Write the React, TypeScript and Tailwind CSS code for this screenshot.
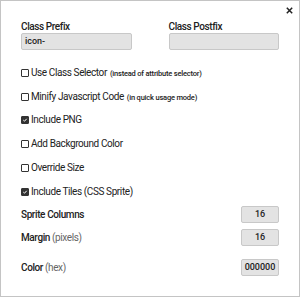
import React from 'react';

const font = { fontFamily: 'Roboto, "Noto Sans", sans-serif' };

function Check({ checked }: { checked?: boolean }) {
  return (
    <span
      className={
        'flex h-[8px] w-[8px] shrink-0 items-center justify-center rounded-[1px] border border-[#333] ' +
        (checked ? 'bg-[#333]' : 'bg-white')
      }
    >
      {checked && (
        <svg width="6" height="6" viewBox="0 0 6 6">
          <path d="M1.3 3.1 L2.5 4.2 L4.7 1.8" fill="none" stroke="#fff" strokeWidth="1" />
        </svg>
      )}
    </span>
  );
}

function Option({ label, note, checked }: { label: string; note?: string; checked?: boolean }) {
  return (
    <div className="flex h-[23.8px] items-center gap-[2px]">
      <Check checked={checked} />
      <span className="text-[10px] tracking-[-0.4px] text-[#222] leading-none">
        {label}
        {note && <span className="ml-[3px] text-[7.5px] font-medium tracking-[-0.2px]">{note}</span>}
      </span>
    </div>
  );
}

function NumBox({ value }: { value: string }) {
  return (
    <div className="flex h-[17px] w-[38px] items-center justify-center rounded-[2px] border border-[#c8c8c8] bg-[#e3e3e3] text-[9px] font-medium text-[#222]">
      {value}
    </div>
  );
}

export default function App() {
  return (
    <div
      className="box-border flex h-[297px] w-[300px] flex-col border border-[#c4c4c4] bg-white pl-[20px] pr-[20px]"
      style={font}
    >
      {/* close */}
      <div className="-mr-[14px] flex h-[20px] justify-end pt-[6px]">
        <svg width="7" height="7" viewBox="0 0 7 7">
          <path d="M0.8 0.8 L6.2 6.2 M6.2 0.8 L0.8 6.2" stroke="#222" strokeWidth="1.5" />
        </svg>
      </div>

      {/* prefix / postfix */}
      <div className="grid grid-cols-2 gap-[37px]">
        <div>
          <div className="mb-[1px] text-[10px] font-medium leading-[11px] tracking-[-0.4px] text-[#222]">Class Prefix</div>
          <div className="flex h-[17px] items-center rounded-[2px] border border-[#c8c8c8] bg-[#e3e3e3] px-[3px] text-[9px] font-medium text-[#222]">
            icon-
          </div>
        </div>
        <div>
          <div className="mb-[1px] text-[10px] font-medium leading-[11px] tracking-[-0.4px] text-[#222]">Class Postfix</div>
          <div className="h-[17px] rounded-[2px] border border-[#c8c8c8] bg-[#e3e3e3]" />
        </div>
      </div>

      {/* options */}
      <div className="mt-[11px] flex flex-col">
        <Option label="Use Class Selector" note="(instead of attribute selector)" />
        <Option label="Minify Javascript Code" note="(in quick usage mode)" />
        <Option label="Include PNG" checked />
        <Option label="Add Background Color" />
        <Option label="Override Size" />
        <Option label="Include Tiles (CSS Sprite)" checked />
      </div>

      {/* sprite settings */}
      <div className="mt-[2px] flex flex-col">
        <div className="flex items-center justify-between">
          <span className="text-[10px] font-medium tracking-[-0.4px] text-[#222]">Sprite Columns</span>
          <NumBox value="16" />
        </div>
        <div className="mt-[6px] flex items-center justify-between">
          <span className="text-[10px] font-medium tracking-[-0.4px] text-[#222]">
            Margin <span className="font-normal text-[#666]">(pixels)</span>
          </span>
          <NumBox value="16" />
        </div>
        <div className="mt-[13px] flex items-center justify-between">
          <span className="text-[10px] font-medium tracking-[-0.4px] text-[#222]">
            Color <span className="font-normal text-[#666]">(hex)</span>
          </span>
          <NumBox value="000000" />
        </div>
      </div>
    </div>
  );
}
